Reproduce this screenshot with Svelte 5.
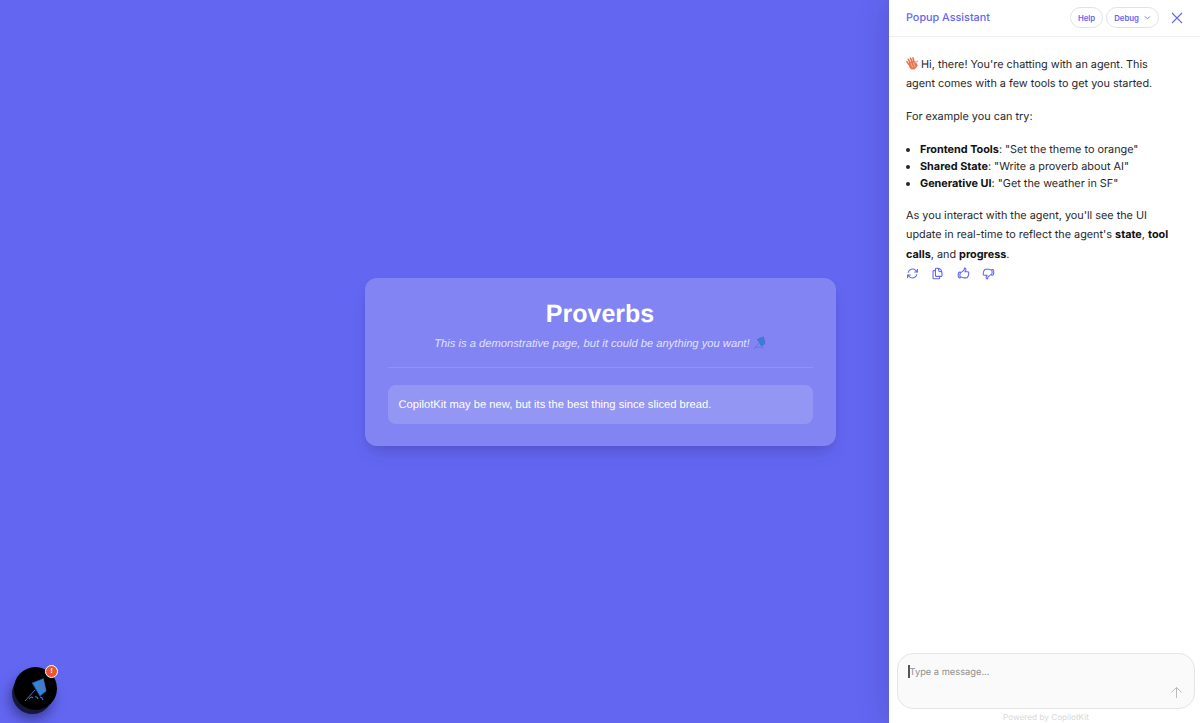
<script lang="ts">
	const tools = [
		{ name: 'Frontend Tools', prompt: '"Set the theme to orange"' },
		{ name: 'Shared State', prompt: '"Write a proverb about AI"' },
		{ name: 'Generative UI', prompt: '"Get the weather in SF"' }
	];
</script>

{#snippet kite(size)}
	<svg class="kite" width={size} height={size} viewBox="0 0 24 24" aria-hidden="true">
		<path d="M8.3 6 L19.3 1.7 L22 14 L16 19 Z" fill="#2f86d8" stroke="#2a5fb0" stroke-width="0.8" />
		<path d="M19.3 1.7 L13 11 L22 14 Z" fill="#4a78c8" />
		<path d="M11 13 L1 24" stroke="#5a6aa8" stroke-width="1" fill="none" />
		<path d="M5 22 q2 -3 4 -1 M11 20 q2 -1 3 2 M16 20 q2 0 3 3" stroke="#3a72d4" stroke-width="1.2" fill="none" />
	</svg>
{/snippet}

<div class="page">
	<main class="stage">
		<section class="card">
			<h1>Proverbs</h1>
			<p class="lead">This is a demonstrative page, but it could be anything you want! {@render kite(13)}</p>
			<hr />
			<div class="proverb">CopilotKit may be new, but its the best thing since sliced bread.</div>
		</section>
	</main>

	<button class="launcher" aria-label="Open chat">
		{@render kite(24)}
		<span class="badge">!</span>
	</button>

	<aside class="panel">
		<header>
			<span class="title">Popup Assistant</span>
			<div class="actions">
				<button class="pill">Help</button>
				<button class="pill">Debug
					<svg width="7" height="7" viewBox="0 0 10 10" fill="none" stroke="currentColor" stroke-width="1.2"><path d="M1.5 3.5 L5 7 L8.5 3.5" /></svg>
				</button>
				<button class="close" aria-label="Close">
					<svg width="12" height="12" viewBox="0 0 12 12" fill="none" stroke="currentColor" stroke-width="1.1"><path d="M1 1 L11 11 M11 1 L1 11" /></svg>
				</button>
			</div>
		</header>

		<div class="messages">
			<p>
				<svg class="wave" width="13" height="13" viewBox="0 0 14 14" aria-hidden="true">
					<path d="M3 8 L1 5 M4.5 6 L2.5 2.5 M6.5 5 L4.8 1.2 M8.5 5 L7.5 1" stroke="#e8734f" stroke-width="1.7" stroke-linecap="round" />
					<path d="M3 6 L8.5 4 L11 6 L12.5 9 Q11 13.5 7 13.5 Q4 13.5 3 9 Z" fill="#e8734f" />
					<path d="M5.5 7 L7 11 M8 6.5 L9.5 10.5" stroke="#f8b9a0" stroke-width="1" stroke-linecap="round" />
					<path d="M9.5 6 L12.5 4.5" stroke="#f4a58a" stroke-width="1.4" stroke-linecap="round" />
				</svg>
				Hi, there! You're chatting with an agent. This agent comes with a few tools to get you started.
			</p>
			<p>For example you can try:</p>
			<ul>
				{#each tools as tool}
					<li><strong>{tool.name}</strong>: {tool.prompt}</li>
				{/each}
			</ul>
			<p class="last">As you interact with the agent, you'll see the UI update in real-time to reflect the agent's <strong>state</strong>, <strong>tool calls</strong>, and <strong>progress</strong>.</p>
			<div class="controls">
				<svg width="13" height="13" viewBox="0 0 24 24" fill="none" stroke="currentColor" stroke-width="2" stroke-linecap="round" stroke-linejoin="round">
					<path d="M16.023 9.348h4.992v-.001M2.985 19.644v-4.992m0 0h4.992m-4.993 0 3.181 3.183a8.25 8.25 0 0 0 13.803-3.7M4.031 9.865a8.25 8.25 0 0 1 13.803-3.7l3.181 3.182m0-4.991v4.99" />
				</svg>
				<svg width="13" height="13" viewBox="0 0 24 24" fill="none" stroke="currentColor" stroke-width="2" stroke-linecap="round" stroke-linejoin="round">
					<path d="M15.75 17.25v3.375c0 .621-.504 1.125-1.125 1.125h-9.75a1.125 1.125 0 0 1-1.125-1.125V7.875c0-.621.504-1.125 1.125-1.125H6.75a9.06 9.06 0 0 1 1.5.124m7.5 10.376h3.375c.621 0 1.125-.504 1.125-1.125V11.25c0-4.46-3.243-8.161-7.5-8.876a9.06 9.06 0 0 0-1.5-.124H9.375c-.621 0-1.125.504-1.125 1.125v3.5m7.5 10.375H9.375a1.125 1.125 0 0 1-1.125-1.125v-9.25m12 6.625v-1.875a3.375 3.375 0 0 0-3.375-3.375h-1.5a1.125 1.125 0 0 1-1.125-1.125v-1.5a3.375 3.375 0 0 0-3.375-3.375H9.75" />
				</svg>
				<svg width="13" height="13" viewBox="0 0 24 24" fill="none" stroke="currentColor" stroke-width="2" stroke-linecap="round" stroke-linejoin="round">
					<path d="M6.633 10.25c.806 0 1.533-.446 2.031-1.08a9.041 9.041 0 0 1 2.861-2.4c.723-.384 1.35-.956 1.653-1.715a4.498 4.498 0 0 0 .322-1.672V2.75a.75.75 0 0 1 .75-.75 2.25 2.25 0 0 1 2.25 2.25c0 1.152-.26 2.243-.723 3.218-.266.558.107 1.282.725 1.282m0 0h3.126c1.026 0 1.945.694 2.054 1.715.045.422.068.85.068 1.285a11.95 11.95 0 0 1-2.649 7.521c-.388.482-.987.729-1.605.729H13.48c-.483 0-.964-.078-1.423-.23l-3.114-1.04a4.501 4.501 0 0 0-1.423-.23H5.904m10.598-9.75H14.25M5.904 18.5c.083.205.173.405.27.602.197.4-.078.898-.523.898h-.908c-.889 0-1.713-.518-1.972-1.368a12 12 0 0 1-.521-3.507c0-1.553.295-3.036.831-4.398C3.387 9.953 4.167 9.5 5 9.5h1.053c.472 0 .745.556.5.96a8.958 8.958 0 0 0-1.302 4.665c0 1.194.232 2.333.654 3.375Z" />
				</svg>
				<svg width="13" height="13" viewBox="0 0 24 24" fill="none" stroke="currentColor" stroke-width="2" stroke-linecap="round" stroke-linejoin="round">
					<path d="M7.498 15.25H4.372c-1.026 0-1.945-.694-2.054-1.715a12.137 12.137 0 0 1-.068-1.285c0-2.848.992-5.464 2.649-7.521C5.287 4.247 5.886 4 6.504 4h4.016a4.5 4.5 0 0 1 1.423.23l3.114 1.04a4.5 4.5 0 0 0 1.423.23h1.294M7.498 15.25c.618 0 .991.724.725 1.282A7.471 7.471 0 0 0 7.5 19.75 2.25 2.25 0 0 0 9.75 22a.75.75 0 0 0 .75-.75v-.633c0-.573.11-1.14.322-1.672.304-.76.93-1.33 1.653-1.715a9.04 9.04 0 0 0 2.86-2.4c.498-.634 1.226-1.08 2.032-1.08h.384m-10.253 1.5H9.7m8.075-9.75c.01.05.027.1.05.148.593 1.2.925 2.55.925 3.977 0 1.487-.36 2.89-.999 4.125m.023-8.25c-.076-.365.183-.75.575-.75h.908c.889 0 1.713.518 1.972 1.368.339 1.11.521 2.287.521 3.507 0 1.553-.295 3.036-.831 4.398-.306.774-1.086 1.227-1.918 1.227h-1.053c-.472 0-.745-.556-.5-.96a8.95 8.95 0 0 0 .303-.54" />
				</svg>
			</div>
		</div>

		<div class="composer">
			<div class="input">
				<span class="caret"></span><span class="placeholder">Type a message...</span>
				<svg class="send" width="13" height="13" viewBox="0 0 14 14" fill="none" stroke="currentColor" stroke-width="1"><path d="M7 13 V1.5 M1.5 7 L7 1.5 L12.5 7" /></svg>
			</div>
			<div class="powered">Powered by CopilotKit</div>
		</div>
	</aside>
</div>

<style>
	:global(body) {
		margin: 0;
	}
	.page {
		position: relative;
		width: 100%;
		height: 723px;
		overflow: hidden;
		background: #6366f1;
		font-family: 'Liberation Sans', Arial, sans-serif;
		text-rendering: geometricPrecision;
	}
	.stage {
		height: 100%;
		display: flex;
		align-items: center;
		justify-content: center;
	}
	.card {
		box-sizing: border-box;
		width: 471px;
		height: 168px;
		padding: 22px 23px;
		border-radius: 12px;
		background: rgba(255, 255, 255, 0.2);
		box-shadow: 0 10px 20px -4px rgba(0, 0, 0, 0.1), 0 6px 10px -4px rgba(0, 0, 0, 0.1);
		color: #fff;
		text-align: center;
	}
	h1 {
		margin: 0;
		font-size: 25px;
		line-height: 28px;
		font-weight: 700;
	}
	.lead {
		margin: 8px 0 0;
		font-size: 11.2px;
		line-height: 17px;
		font-style: italic;
		color: #e0e2fc;
	}
	.kite {
		vertical-align: -2px;
	}
	hr {
		margin: 14px 0 0;
		border: 0;
		border-top: 1px solid rgba(255, 255, 255, 0.12);
	}
	.proverb {
		box-sizing: border-box;
		margin-top: 17px;
		height: 39px;
		padding: 1px 11px 0;
		display: flex;
		align-items: center;
		border-radius: 8px;
		background: rgba(255, 255, 255, 0.15);
		font-size: 11.2px;
	}
	.launcher {
		position: absolute;
		left: 14px;
		top: 667px;
		width: 43px;
		height: 43px;
		padding: 0;
		border: 0;
		border-radius: 50%;
		background: #000;
		display: flex;
		align-items: center;
		justify-content: center;
		box-shadow: -3px 5px 0 -1px #17173a, -4px 10px 12px rgba(30, 30, 90, 0.55);
	}
	.badge {
		position: absolute;
		right: -1px;
		top: -2px;
		box-sizing: border-box;
		width: 13px;
		height: 13px;
		border-radius: 50%;
		background: #f0532d;
		border: 1.5px solid #fff;
		color: #fff;
		font-size: 8px;
		line-height: 10px;
		font-weight: 700;
		text-align: center;
	}
	.panel {
		position: absolute;
		top: 0;
		right: 0;
		bottom: 0;
		width: 311px;
		display: flex;
		flex-direction: column;
		background: #fff;
		box-shadow: 0 0 30px rgba(30, 30, 90, 0.22);
		font-family: Inter, 'Liberation Sans', sans-serif;
		color: #27272a;
	}
	header {
		flex: none;
		box-sizing: border-box;
		height: 37px;
		padding: 0 17px 1px 17px;
		display: flex;
		align-items: center;
		justify-content: space-between;
		border-bottom: 1px solid #eeeeee;
	}
	.title {
		font-size: 10.8px;
		font-weight: 500;
		color: #6366f1;
	}
	.actions {
		display: flex;
		align-items: center;
		gap: 3px;
	}
	.pill {
		box-sizing: border-box;
		height: 21px;
		padding: 0 7px;
		display: flex;
		align-items: center;
		gap: 5px;
		border: 1px solid #e2e2e6;
		border-radius: 11px;
		background: #fff;
		color: #6366f1;
		font-family: inherit;
		font-size: 7.8px;
		font-weight: 600;
	}
	.close {
		margin-left: 9px;
		padding: 0;
		display: flex;
		border: 0;
		background: none;
		color: #6366f1;
	}
	.messages {
		flex: 1;
		padding: 17.6px 26px 0 17px;
		font-size: 10.85px;
		line-height: 19.4px;
	}
	p {
		margin: 0 0 14px;
	}
	.wave {
		vertical-align: -2px;
		margin-right: -1px;
	}
	ul {
		margin: 0 0 14px;
		padding-left: 14px;
		line-height: 17px;
	}
	strong {
		font-weight: 700;
		color: #111;
	}
	.last {
		margin-bottom: 3px;
	}
	.controls {
		display: flex;
		gap: 12.3px;
		color: #6366f1;
	}
	.composer {
		flex: none;
		padding: 0 5px 0 8px;
	}
	.input {
		position: relative;
		box-sizing: border-box;
		height: 56px;
		padding: 11px 10px;
		border: 1px solid #e5e5e5;
		border-radius: 16px;
		background: #fafafa;
		font-size: 9.3px;
		line-height: 14px;
		color: #8f8f8f;
	}
	.caret {
		display: inline-block;
		width: 1.5px;
		height: 13px;
		vertical-align: -3px;
		background: #555;
	}
	.send {
		position: absolute;
		right: 11px;
		bottom: 9px;
		color: #b5b5b5;
	}
	.powered {
		height: 14px;
		font-size: 8.2px;
		line-height: 17px;
		text-align: center;
		color: #d8d8d8;
	}
</style>
